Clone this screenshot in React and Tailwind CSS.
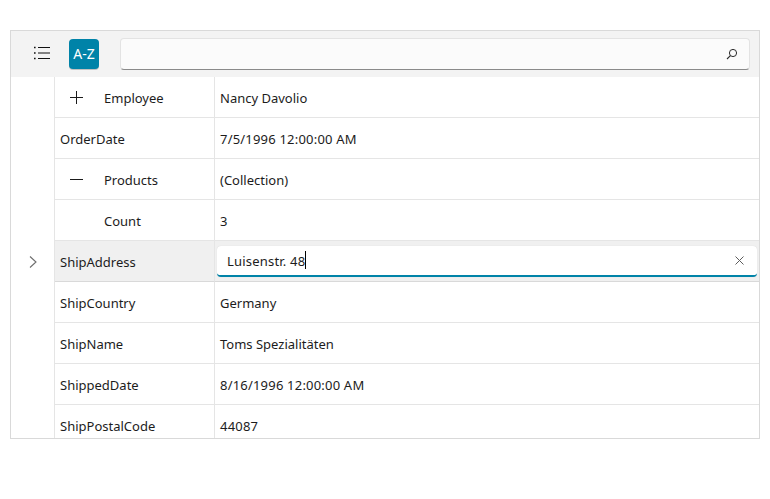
import React from "react";

function Plus() {
  return (
    <svg width="13" height="13" viewBox="0 0 13 13" className="block">
      <path d="M6.5 0V13M0 6.5H13" stroke="#1a1a1a" strokeWidth="1" fill="none" />
    </svg>
  );
}
function Minus() {
  return (
    <svg width="13" height="13" viewBox="0 0 13 13" className="block">
      <path d="M0 6.5H13" stroke="#1a1a1a" strokeWidth="1" fill="none" />
    </svg>
  );
}

function Row({ name, value, icon, indent, selected, editor, wide }) {
  const valueText = `whitespace-nowrap pt-[2px] ${wide ? "tracking-[0.2px]" : ""}`;
  return (
    <div className="flex h-[41px] shrink-0">
      <div className="flex w-[44px] shrink-0 items-center justify-center border-r border-[#e5e5e5]">
        {selected && (
          <svg width="10" height="14" viewBox="0 0 10 14">
            <path d="M2 1.5L8 7L2 12.5" stroke="#6e6e6e" strokeWidth="1.1" fill="none" />
          </svg>
        )}
      </div>
      <div className={`flex w-[160px] shrink-0 items-center border-r border-b border-[#e5e5e5] ${selected ? "bg-[#f0f0f0] border-b-[#d9d9d9]" : ""}`}>
        {indent ? (
          <>
            <div className="w-[49px] shrink-0 pl-[15px]">{icon}</div>
            <span className="whitespace-nowrap pt-[2px]">{name}</span>
          </>
        ) : (
          <span className="whitespace-nowrap pl-[5px] pt-[2px]">{name}</span>
        )}
      </div>
      <div className={`flex min-w-0 flex-1 items-center border-b border-[#e5e5e5] ${selected ? "bg-[#f0f0f0] border-b-[#d9d9d9]" : ""}`}>
        {editor ? (
          <div className="mx-[2px] flex h-[31px] flex-1 items-center rounded-[4px] border-b-2 border-[#0083a8] bg-white pl-[10px] shadow-[0_0_1px_rgba(0,0,0,0.15)]">
            <span className={valueText}>{value}</span>
            <span className="h-[18px] w-px bg-black" />
            <svg width="9" height="9" viewBox="0 0 9 9" className="ml-auto mr-[13px]">
              <path d="M0.5 0.5L8.5 8.5M8.5 0.5L0.5 8.5" stroke="#5c5c5c" strokeWidth="1" fill="none" />
            </svg>
          </div>
        ) : (
          <span className={`${valueText} pl-[5px]`}>{value}</span>
        )}
      </div>
    </div>
  );
}

export default function App() {
  return (
    <div className="h-[499px] w-[770px] bg-white pl-[10px] pt-[30px] font-['Noto_Sans','Open_Sans',sans-serif] text-[13px] leading-[18px] text-[#1c1c1c]">
      <div className="flex h-[409px] w-[750px] flex-col overflow-hidden border border-[#d9d9d9]">
        <div className="flex h-[46px] shrink-0 items-center bg-[#f3f3f3]">
          <svg width="18" height="14" viewBox="0 0 18 14" className="mb-[2px] ml-[22px] shrink-0">
            <path d="M5 1.5H17M5 7H17M5 12.5H17" stroke="#111111" strokeWidth="1" fill="none" />
            <path d="M1 1.5H2.6M1 7H2.6M1 12.5H2.6" stroke="#111111" strokeWidth="1.4" fill="none" />
          </svg>
          <div className="ml-[18px] flex h-[30px] w-[30px] shrink-0 items-center justify-center rounded-[4px] bg-[#0083a8] text-[14px] text-white shadow-[0_1px_0_rgba(0,0,0,0.2)]">
            A-Z
          </div>
          <div className="ml-[21px] flex h-[32px] w-[630px] shrink-0 items-center justify-end rounded-[4px] border border-[#e3e3e3] border-b-[#8a8a8a] bg-[#fbfbfb] pr-[11px]">
            <svg width="12" height="12" viewBox="0 0 12 12">
              <circle cx="7" cy="5" r="3.6" stroke="#2a2a2a" strokeWidth="1" fill="none" />
              <path d="M4.4 7.6L1 11" stroke="#2a2a2a" strokeWidth="1.1" fill="none" />
            </svg>
          </div>
        </div>
        <Row name="Employee" value="Nancy Davolio" indent icon={<Plus />} />
        <Row name="OrderDate" value="7/5/1996 12:00:00 AM" wide />
        <Row name="Products" value="(Collection)" indent icon={<Minus />} />
        <Row name="Count" value="3" indent />
        <Row name="ShipAddress" value="Luisenstr. 48" selected editor wide />
        <Row name="ShipCountry" value="Germany" />
        <Row name="ShipName" value="Toms Spezialitäten" />
        <Row name="ShippedDate" value="8/16/1996 12:00:00 AM" wide />
        <Row name="ShipPostalCode" value="44087" wide />
      </div>
    </div>
  );
}
